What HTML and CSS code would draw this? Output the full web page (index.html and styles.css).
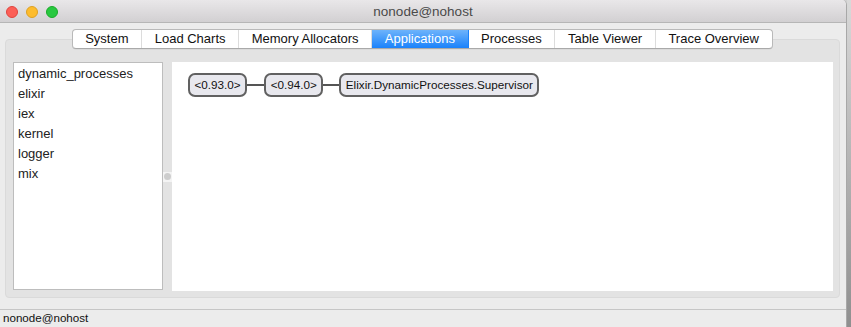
FILE: index.html
```html
<!DOCTYPE html>
<html>
<head>
<meta charset="utf-8">
<link rel="stylesheet" href="styles.css">
</head>
<body>
<div class="desk">
  <div class="window">
    <div class="titlebar">
      <div class="lights">
        <span class="light red"></span>
        <span class="light yellow"></span>
        <span class="light green"></span>
      </div>
      <div class="title">nonode@nohost</div>
    </div>
    <div class="main">
      <div class="tabs">
        <div class="tab">System</div>
        <div class="tab">Load Charts</div>
        <div class="tab">Memory Allocators</div>
        <div class="tab active">Applications</div>
        <div class="tab">Processes</div>
        <div class="tab">Table Viewer</div>
        <div class="tab last">Trace Overview</div>
      </div>
      <div class="group">
        <ul class="applist">
          <li>dynamic_processes</li>
          <li>elixir</li>
          <li>iex</li>
          <li>kernel</li>
          <li>logger</li>
          <li>mix</li>
        </ul>
        <div class="splitter"><span class="grip"></span></div>
        <div class="canvas">
          <div class="tree">
            <div class="node">&lt;0.93.0&gt;</div>
            <div class="edge e1"></div>
            <div class="node">&lt;0.94.0&gt;</div>
            <div class="edge e2"></div>
            <div class="node">Elixir.DynamicProcesses.Supervisor</div>
          </div>
        </div>
      </div>
    </div>
    <div class="status">nonode@nohost</div>
  </div>
  <div class="edgestrip"></div>
</div>
</body>
</html>
```
FILE: styles.css
```css
* { box-sizing: border-box; }
html, body { margin: 0; padding: 0; }
body {
  width: 851px;
  height: 327px;
  overflow: hidden;
  font-family: "Liberation Sans", Arial, sans-serif;
  color: #222;
  background: #cfcfcf;
}
.desk {
  display: flex;
  width: 851px;
  height: 327px;
}
.window {
  width: 847px;
  height: 327px;
  display: flex;
  flex-direction: column;
  background: #ececec;
  border-right: 1px solid #a8a8a8;
  border-top-right-radius: 5px;
  overflow: hidden;
}
.edgestrip {
  flex: 1;
  background: linear-gradient(#d9d9d9, #8f8f8f);
}
.titlebar {
  height: 23px;
  flex: none;
  display: flex;
  align-items: center;
  background: linear-gradient(#e9e7e9, #d2d0d2);
  border-bottom: 1px solid #b6b6b6;
  position: relative;
}
.lights {
  display: flex;
  gap: 8px;
  padding-left: 6px;
  padding-top: 1px;
}
.light {
  width: 12px;
  height: 12px;
  border-radius: 50%;
  display: block;
}
.red { background: #fc5f57; border: 0.5px solid #e0443e; }
.yellow { background: #fdbc2e; border: 0.5px solid #dea123; }
.green { background: #28c840; border: 0.5px solid #1aab29; }
.title {
  flex: 1;
  text-align: center;
  font-size: 13.5px;
  color: #4a4a4a;
  margin-right: 58px;
  padding-top: 1px;
}
.main {
  height: 286px;
  flex: none;
  padding-top: 6px;
  display: flex;
  flex-direction: column;
}
.tabs {
  align-self: center;
  display: flex;
  height: 20px;
  background: #fff;
  border: 1px solid #b9b9b9;
  border-bottom-color: #a9a9a9;
  border-radius: 4px;
  position: relative;
  z-index: 1;
  margin-left: -1px;
  overflow: hidden;
  box-shadow: 0 0.5px 0 rgba(0,0,0,0.08);
}
.tab {
  font-size: 13px;
  line-height: 18px;
  padding: 0 12.6px;
  color: #111;
  border-right: 1px solid #dcdcdc;
}
.tab.last { border-right: none; padding-right: 13.5px; }
.tab.active {
  background: linear-gradient(#6db3fb, #1a82fb);
  color: #fff;
  border-right-color: #1a82fb;
}
.group {
  margin: -10px 6px 0 5px;
  height: 259px;
  background: #e3e3e3;
  border: 1px solid #dadada;
  border-radius: 4px;
  padding: 22px 6px 6px 7px;
  display: flex;
}
.applist {
  list-style: none;
  margin: 0;
  padding: 1px 0 0 4px;
  width: 150px;
  height: 228px;
  background: #fff;
  border: 1px solid #bdbdbd;
  flex: none;
}
.applist li {
  font-size: 13px;
  line-height: 20px;
  color: #222;
}
.splitter {
  width: 9px;
  flex: none;
  display: flex;
  align-items: center;
  justify-content: center;
}
.grip {
  display: block;
  width: 9px;
  height: 10px;
  background: #f4f4f4;
  position: relative;
}
.grip::after {
  content: "";
  position: absolute;
  left: 1px;
  top: 1px;
  width: 7px;
  height: 7px;
  border-radius: 50%;
  background: #cdcdcd;
}
.canvas {
  flex: 1;
  height: 229px;
  background: #fff;
  padding: 11px 0 0 16px;
}
.tree {
  display: flex;
  align-items: center;
}
.node {
  height: 24px;
  border: 2px solid #616161;
  border-radius: 7px;
  background: #e8e8ee;
  font-size: 11.7px;
  line-height: 20px;
  padding: 0 4.5px;
  color: #111;
  white-space: nowrap;
}
.edge {
  height: 2px;
  background: #555;
}
.e1 { width: 17px; }
.e2 { width: 16px; }
.status {
  flex: 1;
  border-top: 1px solid #c6c6c6;
  font-size: 11.6px;
  line-height: 16px;
  padding-left: 3px;
  color: #111;
  background: #ececec;
}
```
